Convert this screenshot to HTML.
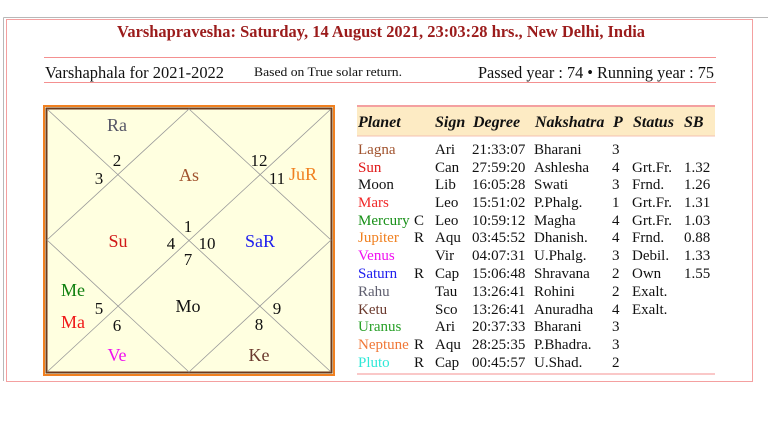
<!DOCTYPE html>
<html><head><meta charset="utf-8"><style>
html,body{margin:0;padding:0;background:#fff;width:768px;height:432px;overflow:hidden}
svg{display:block}
text{font-family:"Liberation Serif",serif}
</style></head><body>
<svg width="768" height="432" viewBox="0 0 768 432">
<rect x="0" y="0" width="768" height="432" fill="#fff"/>
<line x1="3.5" y1="17.5" x2="768" y2="17.5" stroke="#b8b8b8" stroke-width="1"/>
<line x1="3.5" y1="17.5" x2="3.5" y2="381" stroke="#b8b8b8" stroke-width="1"/>
<rect x="6.5" y="19.5" width="746" height="362" fill="none" stroke="#f4a0a0" stroke-width="1"/>
<text x="381" y="37" text-anchor="middle" font-weight="bold" font-size="17" fill="#9b1b1b" textLength="528" lengthAdjust="spacingAndGlyphs">Varshapravesha: Saturday, 14 August 2021, 23:03:28 hrs., New Delhi, India</text>
<line x1="44" y1="57.5" x2="716" y2="57.5" stroke="#f49090" stroke-width="1"/>
<line x1="44" y1="82.5" x2="716" y2="82.5" stroke="#f49090" stroke-width="1"/>
<text x="45" y="78" font-size="17" fill="#111" textLength="179" lengthAdjust="spacingAndGlyphs">Varshaphala for 2021-2022</text>
<text x="254" y="76" font-size="13" fill="#111" textLength="148" lengthAdjust="spacingAndGlyphs">Based on True solar return.</text>
<text x="478" y="78" font-size="17" fill="#111" textLength="236" lengthAdjust="spacingAndGlyphs">Passed year : 74 • Running year : 75</text>
<rect x="44" y="106" width="290" height="269" fill="#ffffe0" stroke="#f08020" stroke-width="2"/>
<rect x="46.5" y="108.5" width="285" height="264" fill="none" stroke="#6b3a1e" stroke-width="2"/>
<g stroke="#999" stroke-width="0.8" fill="none">
<line x1="47" y1="109" x2="331" y2="372"/>
<line x1="331" y1="109" x2="47" y2="372"/>
<polygon points="189,109 331,240 189,372 47,240"/>
</g>
<g font-size="18" text-anchor="middle">
<text x="117" y="131" fill="#556">Ra</text>
<text x="189" y="181" fill="#a0522d">As</text>
<text x="303" y="180" fill="#f08020">JuR</text>
<text x="118" y="247" fill="#d01818">Su</text>
<text x="260" y="247" fill="#2020ee">SaR</text>
<text x="73" y="296" fill="#108010">Me</text>
<text x="73" y="328" fill="#f01818">Ma</text>
<text x="188" y="312" fill="#111">Mo</text>
<text x="117" y="361" fill="#f010f0">Ve</text>
<text x="259" y="361" fill="#6b3a2e">Ke</text>
</g>
<g font-size="17" text-anchor="middle" fill="#111">
<text x="117" y="166">2</text>
<text x="99" y="184">3</text>
<text x="259" y="166">12</text>
<text x="277" y="184">11</text>
<text x="188" y="232">1</text>
<text x="171" y="249">4</text>
<text x="207" y="249">10</text>
<text x="188" y="265">7</text>
<text x="99" y="314">5</text>
<text x="117" y="331">6</text>
<text x="277" y="314">9</text>
<text x="259" y="330">8</text>
</g>
<rect x="357" y="106" width="358" height="30" fill="#fdebc4"/>
<line x1="357" y1="106" x2="715" y2="106" stroke="#f4a0a0" stroke-width="2"/>
<line x1="357" y1="136" x2="715" y2="136" stroke="#f4c0b0" stroke-width="1"/>
<g font-size="16" font-weight="bold" font-style="italic" fill="#111">
<text x="358" y="127">Planet</text>
<text x="435" y="127">Sign</text>
<text x="473" y="127">Degree</text>
<text x="535" y="127">Nakshatra</text>
<text x="613" y="127">P</text>
<text x="633" y="127">Status</text>
<text x="684" y="127">SB</text>
</g>
<g font-size="15" fill="#111">
<text x="358" y="154" fill="#a0522d">Lagna</text>
<text x="435" y="154">Ari</text><text x="472" y="154">21:33:07</text><text x="534" y="154">Bharani</text><text x="612" y="154">3</text>
<text x="358" y="172" fill="#e01818">Sun</text>
<text x="435" y="172">Can</text><text x="472" y="172">27:59:20</text><text x="534" y="172">Ashlesha</text><text x="612" y="172">4</text><text x="632" y="172">Grt.Fr.</text><text x="684" y="172">1.32</text>
<text x="358" y="189">Moon</text>
<text x="435" y="189">Lib</text><text x="472" y="189">16:05:28</text><text x="534" y="189">Swati</text><text x="612" y="189">3</text><text x="632" y="189">Frnd.</text><text x="684" y="189">1.26</text>
<text x="358" y="207" fill="#f02828">Mars</text>
<text x="435" y="207">Leo</text><text x="472" y="207">15:51:02</text><text x="534" y="207">P.Phalg.</text><text x="612" y="207">1</text><text x="632" y="207">Grt.Fr.</text><text x="684" y="207">1.31</text>
<text x="358" y="225" fill="#189018">Mercury</text><text x="414" y="225">C</text>
<text x="435" y="225">Leo</text><text x="472" y="225">10:59:12</text><text x="534" y="225">Magha</text><text x="612" y="225">4</text><text x="632" y="225">Grt.Fr.</text><text x="684" y="225">1.03</text>
<text x="358" y="242" fill="#f08020">Jupiter</text><text x="414" y="242">R</text>
<text x="435" y="242">Aqu</text><text x="472" y="242">03:45:52</text><text x="534" y="242">Dhanish.</text><text x="612" y="242">4</text><text x="632" y="242">Frnd.</text><text x="684" y="242">0.88</text>
<text x="358" y="260" fill="#f010f0">Venus</text>
<text x="435" y="260">Vir</text><text x="472" y="260">04:07:31</text><text x="534" y="260">U.Phalg.</text><text x="612" y="260">3</text><text x="632" y="260">Debil.</text><text x="684" y="260">1.33</text>
<text x="358" y="278" fill="#2020ee">Saturn</text><text x="414" y="278">R</text>
<text x="435" y="278">Cap</text><text x="472" y="278">15:06:48</text><text x="534" y="278">Shravana</text><text x="612" y="278">2</text><text x="632" y="278">Own</text><text x="684" y="278">1.55</text>
<text x="358" y="296" fill="#606070">Rahu</text>
<text x="435" y="296">Tau</text><text x="472" y="296">13:26:41</text><text x="534" y="296">Rohini</text><text x="612" y="296">2</text><text x="632" y="296">Exalt.</text>
<text x="358" y="314" fill="#6b3a2e">Ketu</text>
<text x="435" y="314">Sco</text><text x="472" y="314">13:26:41</text><text x="534" y="314">Anuradha</text><text x="612" y="314">4</text><text x="632" y="314">Exalt.</text>
<text x="358" y="331" fill="#28a028">Uranus</text>
<text x="435" y="331">Ari</text><text x="472" y="331">20:37:33</text><text x="534" y="331">Bharani</text><text x="612" y="331">3</text>
<text x="358" y="349" fill="#f07838">Neptune</text><text x="414" y="349">R</text>
<text x="435" y="349">Aqu</text><text x="472" y="349">28:25:35</text><text x="534" y="349">P.Bhadra.</text><text x="612" y="349">3</text>
<text x="358" y="367" fill="#30e8d8">Pluto</text><text x="414" y="367">R</text>
<text x="435" y="367">Cap</text><text x="472" y="367">00:45:57</text><text x="534" y="367">U.Shad.</text><text x="612" y="367">2</text>
</g>
<line x1="357" y1="374" x2="715" y2="374" stroke="#f49090" stroke-width="1"/>
</svg>
</body></html>
